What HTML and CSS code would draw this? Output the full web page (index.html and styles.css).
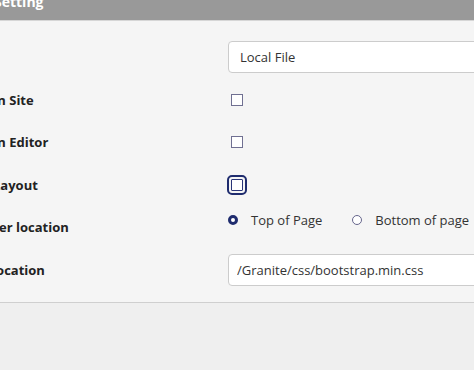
FILE: index.html
```html
<!DOCTYPE html>
<html lang="en">
<head>
  <meta charset="UTF-8">
  <title>CSS Setting</title>
  <link rel="stylesheet" href="styles.css">
</head>
<body>
<div class="modal">
  <div class="modal-header">
    <h4 class="modal-title">CSS Setting</h4>
  </div>
  <div class="modal-body">
    <form class="form">
      <div class="row">
        <label>Type</label>
        <div class="control">
          <select class="field select">
            <option>Local File</option>
            <option>CDN</option>
          </select>
        </div>
      </div>
      <div class="row">
        <label>Use in Site</label>
        <div class="control"><input type="checkbox" class="check"></div>
      </div>
      <div class="row">
        <label>Use in Editor</label>
        <div class="control"><input type="checkbox" class="check"></div>
      </div>
      <div class="row">
        <label>Full Layout</label>
        <div class="control"><input type="checkbox" class="check focused"></div>
      </div>
      <div class="row">
        <label>Render location</label>
        <div class="control radios">
          <label class="radio"><input type="radio" name="loc" checked> Top of Page</label>
          <label class="radio"><input type="radio" name="loc"> Bottom of page</label>
        </div>
      </div>
      <div class="row">
        <label>File location</label>
        <div class="control">
          <input type="text" class="field text" value="/Granite/css/bootstrap.min.css">
        </div>
      </div>
    </form>
  </div>
  <div class="modal-footer"></div>
</div>
</body>
</html>
```

FILE: styles.css
```css
* {
  margin: 0;
  padding: 0;
  box-sizing: border-box;
}

body {
  overflow: hidden;
  background: #f5f5f5;
  font-family: "Open Sans", "Liberation Sans", sans-serif;
  font-size: 13px;
  color: #333;
}

.modal {
  width: 620px;
  margin-left: -49px;
}

.modal-header {
  margin-top: -23px;
  padding: 15px 15px 8px;
  background: #999;
  border-bottom: 1px solid #d6d6d6;
}

.modal-title {
  font-size: 14px;
  line-height: 20px;
  font-weight: 700;
  color: #fff;
}

.modal-body {
  padding: 20px 15px 16px;
  background: #f5f5f5;
}

.form {
  display: flex;
  flex-direction: column;
  gap: 10.6px;
}

.row {
  display: grid;
  grid-template-columns: 262px 1fr;
  align-items: center;
  min-height: 32px;
}

.row > label {
  font-weight: 700;
  color: #222;
}

.control {
  display: flex;
  align-items: center;
}

.field {
  appearance: none;
  width: 320px;
  height: 32px;
  padding: 0 11px;
  border: 1px solid #ccc;
  border-radius: 4px;
  background: #fff;
  font-family: inherit;
  font-size: 13px;
  color: #333;
}

.field.text {
  padding: 0 8px;
}

.check {
  appearance: none;
  width: 12px;
  height: 12px;
  margin-left: 3px;
  border: 1.5px solid #707092;
  background: #fff;
}

.check.focused {
  border-color: #2a3578;
  outline: 2px solid #1f2c6e;
  outline-offset: 2px;
  border-radius: 1px;
}

.radios {
  align-self: start;
  gap: 30px;
  line-height: 18px;
}

.radio {
  display: flex;
  align-items: center;
  gap: 13px;
}

.radio input {
  appearance: none;
  width: 10px;
  height: 10px;
  border: 1.5px solid #66668c;
  border-radius: 50%;
  background: #fff;
}

.radio input:checked {
  border: 3px solid #1f2c6e;
}

.modal-footer {
  height: 80px;
  background: #efefef;
  border-top: 1px solid #cfcfcf;
}
```
